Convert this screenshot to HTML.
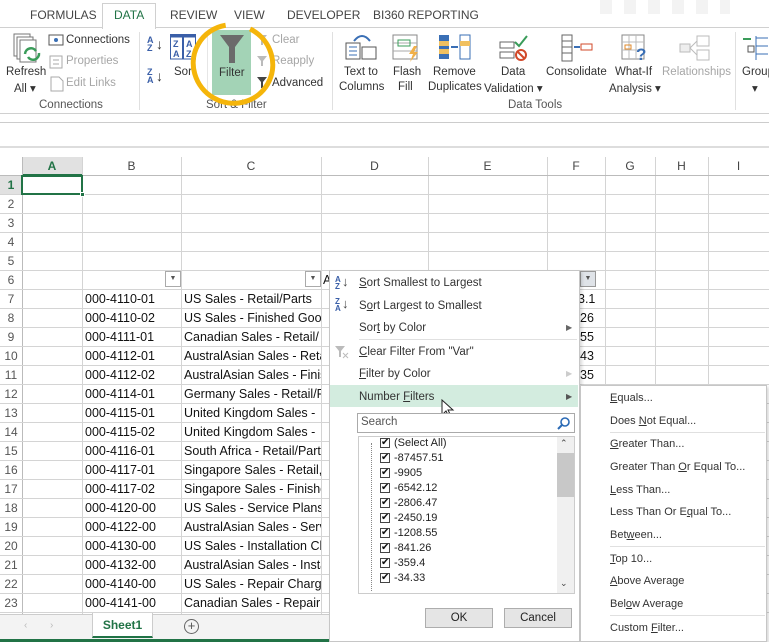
<!DOCTYPE html>
<html><head><meta charset="utf-8"><style>
*{margin:0;padding:0;box-sizing:border-box}
body{width:769px;height:642px;overflow:hidden;background:#fff;font-family:"Liberation Sans",sans-serif;color:#222;position:relative}
.a{position:absolute;white-space:nowrap}
.t{font-size:12px;color:#444}
.rb{font-size:11.5px;color:#333}
.g{color:#a6a6a6}
.hl{position:absolute;background:#d4d4d4}
.vl{position:absolute;background:#d4d4d4;width:1px}
.c{position:absolute;font-size:12.5px;color:#111;overflow:hidden;white-space:nowrap;height:19px;line-height:19px}
.rn{position:absolute;left:0;width:22px;text-align:center;font-size:12px;color:#555;height:19px;line-height:19px}
.ch{position:absolute;top:157px;height:19px;line-height:19px;text-align:center;font-size:12px;color:#444}
.mi{position:absolute;left:359px;font-size:11.5px;color:#333}
.si{position:absolute;left:610px;font-size:11px;color:#333}
.cb{position:absolute;left:380px;width:10px;height:10px;border:1px solid #444;background:#fff;font-size:10px;line-height:8px;text-align:center;color:#111}
.lv{position:absolute;left:394px;font-size:11px;color:#222}
</style></head><body>
<div class="a" style="left:102px;top:3px;width:54px;height:26px;border:1px solid #d0d0d0;border-bottom:none;background:#fff"></div>
<div class="a t" style="left:30px;top:8px">FORMULAS</div>
<div class="a t" style="left:114px;top:8px;color:#217346">DATA</div>
<div class="a t" style="left:170px;top:8px">REVIEW</div>
<div class="a t" style="left:234px;top:8px">VIEW</div>
<div class="a t" style="left:287px;top:8px">DEVELOPER</div>
<div class="a t" style="left:373px;top:8px">BI360 REPORTING</div>
<div class="a" style="left:0;top:27px;width:102px;height:1px;background:#d0d0d0"></div>
<div class="a" style="left:156px;top:27px;width:613px;height:1px;background:#d0d0d0"></div>
<div class="a" style="left:600px;top:0;width:130px;height:14px;background:repeating-linear-gradient(90deg,#f3f3f3 0 12px,#fff 12px 24px)"></div>
<div class="a" style="left:0;top:113px;width:769px;height:1px;background:#d0d0d0"></div>
<div class="a" style="left:0;top:122px;width:769px;height:1px;background:#ccc"></div>
<div class="a" style="left:0;top:146px;width:769px;height:2px;background:#ddd"></div>
<div class="vl" style="left:139px;top:32px;height:78px;background:#e0e0e0"></div>
<div class="vl" style="left:332px;top:32px;height:78px;background:#e0e0e0"></div>
<div class="vl" style="left:735px;top:32px;height:78px;background:#e0e0e0"></div>
<svg class="a" style="left:12px;top:32px" width="30" height="34"><rect x="2" y="2" width="16" height="22" fill="#fff" stroke="#777"/><rect x="5" y="5" width="16" height="22" fill="#fff" stroke="#777"/><rect x="8" y="8" width="16" height="22" fill="#fff" stroke="#777"/><path d="M13 22a6 6 0 0 1 11-3M27 21a6 6 0 0 1-11 4" stroke="#3a9c5a" stroke-width="2.5" fill="none"/></svg>
<div class="a rb" style="left:6px;top:66px">Refresh</div>
<div class="a rb" style="left:14px;top:81px">All ▾</div>
<svg class="a" style="left:48px;top:34px" width="16" height="14"><rect x="1" y="1" width="14" height="10" fill="#fff" stroke="#555"/><circle cx="8" cy="6" r="2" fill="#3a6fb5"/></svg>
<div class="a rb" style="left:66px;top:34px">Connections</div>
<svg class="a" style="left:49px;top:55px" width="14" height="14"><rect x="1" y="1" width="12" height="12" fill="#fff" stroke="#aaa"/><path d="M4 5h6M4 9h6" stroke="#aaa"/></svg>
<div class="a rb g" style="left:66px;top:55px">Properties</div>
<svg class="a" style="left:50px;top:76px" width="14" height="16"><path d="M1 1h8l4 4v10H1z" fill="#fff" stroke="#aaa"/></svg>
<div class="a rb g" style="left:66px;top:77px">Edit Links</div>
<div class="a rb" style="left:39px;top:99px;color:#555">Connections</div>
<div class="a" style="left:147px;top:36px;font-size:9px;line-height:8px;color:#3a5fa8;font-weight:bold">A<br>Z</div><div class="a" style="left:156px;top:36px;font-size:14px;color:#333">↓</div>
<div class="a" style="left:147px;top:68px;font-size:9px;line-height:8px;color:#3a5fa8;font-weight:bold">Z<br>A</div><div class="a" style="left:156px;top:68px;font-size:14px;color:#333">↓</div>
<svg class="a" style="left:170px;top:34px" width="26" height="26"><rect x="0" y="0" width="26" height="3" fill="#3a5fa8"/><rect x="0.5" y="3" width="12" height="22" fill="#fff" stroke="#3a5fa8"/><rect x="13.5" y="3" width="12" height="22" fill="#fff" stroke="#3a5fa8"/><text x="3" y="13" font-size="9" fill="#3a5fa8" font-family="Liberation Sans" font-weight="bold">Z</text><text x="3" y="23" font-size="9" fill="#3a5fa8" font-family="Liberation Sans" font-weight="bold">A</text><text x="16" y="13" font-size="9" fill="#3a5fa8" font-family="Liberation Sans" font-weight="bold">A</text><text x="16" y="23" font-size="9" fill="#3a5fa8" font-family="Liberation Sans" font-weight="bold">Z</text></svg>
<div class="a rb" style="left:174px;top:66px">Sort</div>
<div class="vl" style="left:207px;top:36px;height:56px;background:#e6e6e6"></div>
<div class="a" style="left:212px;top:30px;width:39px;height:65px;background:#a3d3b6"></div>
<svg class="a" style="left:218px;top:33px" width="28" height="32"><path d="M2 2h24L17 14v16h-6V14z" fill="#6b6b6b"/></svg>
<div class="a rb" style="left:219px;top:67px">Filter</div>
<svg class="a" style="left:256px;top:34px" width="12" height="12"><path d="M1 1h10L7 6v5H5V6z" fill="#bbb"/></svg>
<div class="a rb g" style="left:272px;top:34px">Clear</div>
<svg class="a" style="left:256px;top:55px" width="14" height="14"><path d="M1 1h10L7 6v5H5V6z" fill="#bbb"/></svg>
<div class="a rb g" style="left:272px;top:55px">Reapply</div>
<svg class="a" style="left:256px;top:76px" width="14" height="14"><path d="M1 1h10L7 6v6H5V6z" fill="#444"/><path d="M7 12l5-5" stroke="#3a6fb5" stroke-width="2"/></svg>
<div class="a rb" style="left:272px;top:77px">Advanced</div>
<div class="a rb" style="left:206px;top:99px;color:#555">Sort &amp; Filter</div>
<svg class="a" style="left:188px;top:18px" width="96" height="90"><ellipse cx="45" cy="46" rx="39" ry="40" fill="none" stroke="#f5b50a" stroke-width="5" stroke-dasharray="220 25" transform="rotate(-60 45 46)"/></svg>
<svg class="a" style="left:344px;top:33px" width="34" height="28"><rect x="2" y="10" width="14" height="16" fill="#fff" stroke="#555"/><path d="M5 14h8M5 18h8M5 22h8" stroke="#3a6fb5"/><rect x="18" y="14" width="14" height="12" fill="#fff" stroke="#555"/><path d="M10 8q8-10 16 0" stroke="#3a6fb5" stroke-width="2" fill="none"/></svg>
<div class="a rb" style="left:344px;top:66px">Text to</div>
<div class="a rb" style="left:339px;top:81px">Columns</div>
<svg class="a" style="left:392px;top:34px" width="30" height="28"><rect x="1" y="1" width="24" height="24" fill="#fff" stroke="#888"/><path d="M1 9h24M1 17h24" stroke="#aaa"/><rect x="6" y="6" width="12" height="6" fill="none" stroke="#3a9c5a"/><path d="M22 12l-5 8h4l-3 8 8-10h-4l3-6z" fill="#f0b04a"/></svg>
<div class="a rb" style="left:393px;top:66px">Flash</div>
<div class="a rb" style="left:398px;top:81px">Fill</div>
<svg class="a" style="left:438px;top:34px" width="34" height="26"><rect x="1" y="1" width="10" height="24" fill="#3a6fb5"/><rect x="1" y="7" width="10" height="5" fill="#f0c060"/><rect x="1" y="15" width="10" height="5" fill="#f0c060"/><path d="M13 13h7" stroke="#3a6fb5" stroke-width="2"/><rect x="22" y="1" width="10" height="24" fill="#fff" stroke="#3a6fb5"/><rect x="22" y="7" width="10" height="5" fill="#f0c060"/></svg>
<div class="a rb" style="left:433px;top:66px">Remove</div>
<div class="a rb" style="left:428px;top:81px">Duplicates</div>
<svg class="a" style="left:499px;top:34px" width="30" height="28"><rect x="1" y="8" width="14" height="6" fill="#fff" stroke="#666"/><rect x="1" y="18" width="14" height="6" fill="#fff" stroke="#666"/><path d="M16 8l4 4 8-10" stroke="#3a9c5a" stroke-width="2" fill="none"/><circle cx="22" cy="21" r="5" fill="none" stroke="#d2492a" stroke-width="2"/><path d="M18 17l8 8" stroke="#d2492a" stroke-width="2"/></svg>
<div class="a rb" style="left:501px;top:66px">Data</div>
<div class="a rb" style="left:484px;top:81px">Validation ▾</div>
<svg class="a" style="left:561px;top:34px" width="34" height="28"><rect x="1" y="1" width="10" height="26" fill="#fff" stroke="#666"/><path d="M1 7h10M1 13h10M1 19h10" stroke="#666"/><path d="M13 13h6" stroke="#3a6fb5" stroke-width="2"/><rect x="20" y="10" width="11" height="6" fill="#fff" stroke="#d2492a"/></svg>
<div class="a rb" style="left:546px;top:66px">Consolidate</div>
<svg class="a" style="left:621px;top:34px" width="30" height="28"><rect x="1" y="1" width="22" height="24" fill="#fff" stroke="#888"/><path d="M1 8h22M1 16h22M8 1v24M15 1v24" stroke="#bbb"/><rect x="4" y="11" width="6" height="4" fill="none" stroke="#e08a2a"/><text x="15" y="26" font-size="17" fill="#3a6fb5" font-weight="bold" font-family="Liberation Sans">?</text></svg>
<div class="a rb" style="left:615px;top:66px">What-If</div>
<div class="a rb" style="left:609px;top:81px">Analysis ▾</div>
<svg class="a" style="left:679px;top:34px" width="34" height="28"><rect x="1" y="10" width="10" height="8" fill="#eee" stroke="#bbb"/><rect x="18" y="2" width="12" height="10" fill="#fff" stroke="#bbb"/><rect x="18" y="16" width="12" height="10" fill="#fff" stroke="#bbb"/><path d="M11 14l7-7M11 14l7 7" stroke="#bbb"/></svg>
<div class="a rb g" style="left:662px;top:66px">Relationships</div>
<div class="a rb" style="left:508px;top:99px;color:#555">Data Tools</div>
<svg class="a" style="left:742px;top:34px" width="27" height="28"><path d="M1 5h8" stroke="#3a9c5a" stroke-width="2"/><rect x="6" y="12" width="6" height="6" fill="#fff" stroke="#555"/><path d="M14 2v24M14 4h12M14 12h12M14 20h12" stroke="#3a6fb5"/></svg>
<div class="a rb" style="left:742px;top:66px">Group</div>
<div class="a rb" style="left:752px;top:81px">▾</div>
<div class="a" style="left:22px;top:157px;width:60px;height:19px;background:#e1e1e1;border-bottom:2px solid #217346"></div>
<div class="a" style="left:0;top:176px;width:22px;height:19px;background:#e1e1e1"></div>
<div class="ch" style="left:22px;width:60px;color:#217346;font-weight:bold">A</div>
<div class="ch" style="left:82px;width:99px">B</div>
<div class="ch" style="left:181px;width:140px">C</div>
<div class="ch" style="left:321px;width:107px">D</div>
<div class="ch" style="left:428px;width:119px">E</div>
<div class="ch" style="left:547px;width:58px">F</div>
<div class="ch" style="left:605px;width:50px">G</div>
<div class="ch" style="left:655px;width:53px">H</div>
<div class="ch" style="left:708px;width:61px">I</div>
<div class="vl" style="left:22px;top:157px;height:457px;background:#bbb"></div>
<div class="vl" style="left:82px;top:157px;height:457px"></div>
<div class="vl" style="left:181px;top:157px;height:457px"></div>
<div class="vl" style="left:321px;top:157px;height:457px"></div>
<div class="vl" style="left:428px;top:157px;height:457px"></div>
<div class="vl" style="left:547px;top:157px;height:457px"></div>
<div class="vl" style="left:605px;top:157px;height:457px"></div>
<div class="vl" style="left:655px;top:157px;height:457px"></div>
<div class="vl" style="left:708px;top:157px;height:457px"></div>
<div class="hl" style="left:0;top:175px;width:769px;height:1px;background:#bbb"></div>
<div class="hl" style="left:0;top:194px;width:769px;height:1px"></div>
<div class="hl" style="left:0;top:213px;width:769px;height:1px"></div>
<div class="hl" style="left:0;top:232px;width:769px;height:1px"></div>
<div class="hl" style="left:0;top:251px;width:769px;height:1px"></div>
<div class="hl" style="left:0;top:270px;width:769px;height:1px"></div>
<div class="hl" style="left:0;top:289px;width:769px;height:1px"></div>
<div class="hl" style="left:0;top:308px;width:769px;height:1px"></div>
<div class="hl" style="left:0;top:327px;width:769px;height:1px"></div>
<div class="hl" style="left:0;top:346px;width:769px;height:1px"></div>
<div class="hl" style="left:0;top:365px;width:769px;height:1px"></div>
<div class="hl" style="left:0;top:384px;width:769px;height:1px"></div>
<div class="hl" style="left:0;top:403px;width:769px;height:1px"></div>
<div class="hl" style="left:0;top:422px;width:769px;height:1px"></div>
<div class="hl" style="left:0;top:441px;width:769px;height:1px"></div>
<div class="hl" style="left:0;top:460px;width:769px;height:1px"></div>
<div class="hl" style="left:0;top:479px;width:769px;height:1px"></div>
<div class="hl" style="left:0;top:498px;width:769px;height:1px"></div>
<div class="hl" style="left:0;top:517px;width:769px;height:1px"></div>
<div class="hl" style="left:0;top:536px;width:769px;height:1px"></div>
<div class="hl" style="left:0;top:555px;width:769px;height:1px"></div>
<div class="hl" style="left:0;top:574px;width:769px;height:1px"></div>
<div class="hl" style="left:0;top:593px;width:769px;height:1px"></div>
<div class="hl" style="left:0;top:612px;width:769px;height:1px"></div>
<div class="a" style="left:21px;top:175px;width:62px;height:20px;border:2px solid #217346"></div>
<div class="a" style="left:80px;top:192px;width:5px;height:5px;background:#217346;border:1px solid #fff"></div>
<div class="rn" style="top:176px;color:#217346;font-weight:bold">1</div>
<div class="rn" style="top:195px">2</div><div class="rn" style="top:214px">3</div><div class="rn" style="top:233px">4</div><div class="rn" style="top:252px">5</div><div class="rn" style="top:271px">6</div><div class="rn" style="top:290px">7</div><div class="rn" style="top:309px">8</div><div class="rn" style="top:328px">9</div><div class="rn" style="top:347px">10</div><div class="rn" style="top:366px">11</div><div class="rn" style="top:385px">12</div><div class="rn" style="top:404px">13</div><div class="rn" style="top:423px">14</div><div class="rn" style="top:442px">15</div><div class="rn" style="top:461px">16</div><div class="rn" style="top:480px">17</div><div class="rn" style="top:499px">18</div><div class="rn" style="top:518px">19</div><div class="rn" style="top:537px">20</div><div class="rn" style="top:556px">21</div><div class="rn" style="top:575px">22</div><div class="rn" style="top:594px">23</div>
<div class="a" style="left:165px;top:271px;width:16px;height:16px;border:1px solid #aaa;background:#fff;font-size:7px;text-align:center;line-height:14px;color:#555">▼</div>
<div class="a" style="left:305px;top:271px;width:16px;height:16px;border:1px solid #aaa;background:#fff;font-size:7px;text-align:center;line-height:14px;color:#555">▼</div>
<div class="c" style="left:323px;top:271px">A</div>
<div class="a" style="left:580px;top:271px;width:16px;height:16px;border:1px solid #999;background:#dfe3e8;font-size:7px;text-align:center;line-height:14px;color:#555">▼</div>
<div class="c" style="left:85px;top:290px">000-4110-01</div>
<div class="c" style="left:85px;top:309px">000-4110-02</div>
<div class="c" style="left:85px;top:328px">000-4111-01</div>
<div class="c" style="left:85px;top:347px">000-4112-01</div>
<div class="c" style="left:85px;top:366px">000-4112-02</div>
<div class="c" style="left:85px;top:385px">000-4114-01</div>
<div class="c" style="left:85px;top:404px">000-4115-01</div>
<div class="c" style="left:85px;top:423px">000-4115-02</div>
<div class="c" style="left:85px;top:442px">000-4116-01</div>
<div class="c" style="left:85px;top:461px">000-4117-01</div>
<div class="c" style="left:85px;top:480px">000-4117-02</div>
<div class="c" style="left:85px;top:499px">000-4120-00</div>
<div class="c" style="left:85px;top:518px">000-4122-00</div>
<div class="c" style="left:85px;top:537px">000-4130-00</div>
<div class="c" style="left:85px;top:556px">000-4132-00</div>
<div class="c" style="left:85px;top:575px">000-4140-00</div>
<div class="c" style="left:85px;top:594px">000-4141-00</div>
<div class="c" style="left:184px;top:290px;width:137px">US Sales - Retail/Parts</div>
<div class="c" style="left:184px;top:309px;width:137px">US Sales - Finished Goods</div>
<div class="c" style="left:184px;top:328px;width:137px">Canadian Sales - Retail/</div>
<div class="c" style="left:184px;top:347px;width:137px">AustralAsian Sales - Retail</div>
<div class="c" style="left:184px;top:366px;width:137px">AustralAsian Sales - Finished</div>
<div class="c" style="left:184px;top:385px;width:137px">Germany Sales - Retail/Parts</div>
<div class="c" style="left:184px;top:404px;width:137px">United Kingdom Sales -</div>
<div class="c" style="left:184px;top:423px;width:137px">United Kingdom Sales -</div>
<div class="c" style="left:184px;top:442px;width:137px">South Africa - Retail/Parts</div>
<div class="c" style="left:184px;top:461px;width:137px">Singapore Sales - Retail,</div>
<div class="c" style="left:184px;top:480px;width:137px">Singapore Sales - Finished</div>
<div class="c" style="left:184px;top:499px;width:137px">US Sales - Service Plans</div>
<div class="c" style="left:184px;top:518px;width:137px">AustralAsian Sales - Service</div>
<div class="c" style="left:184px;top:537px;width:137px">US Sales - Installation Ch</div>
<div class="c" style="left:184px;top:556px;width:137px">AustralAsian Sales - Install</div>
<div class="c" style="left:184px;top:575px;width:137px">US Sales - Repair Charge</div>
<div class="c" style="left:184px;top:594px;width:137px">Canadian Sales - Repair</div>
<div class="c" style="left:578px;top:290px">3.1</div>
<div class="c" style="left:580px;top:309px">26</div>
<div class="c" style="left:580px;top:328px">55</div>
<div class="c" style="left:580px;top:347px">43</div>
<div class="c" style="left:580px;top:366px">35</div>
<div class="a" style="left:0;top:614px;width:329px;height:26px;background:#f3f3f3;border-top:1px solid #ccc"></div>
<div class="a" style="left:24px;top:620px;font-size:10px;color:#bbb">‹</div>
<div class="a" style="left:50px;top:620px;font-size:10px;color:#bbb">›</div>
<div class="a" style="left:92px;top:613px;width:61px;height:25px;background:#fff;border-bottom:2px solid #217346;border-left:1px solid #ccc;border-right:1px solid #ccc;font-size:12px;font-weight:bold;color:#217346;text-align:center;line-height:24px">Sheet1</div>
<div class="a" style="left:184px;top:619px;width:15px;height:15px;border:1px solid #666;border-radius:50%;font-size:13px;line-height:12px;text-align:center;color:#555">+</div>
<div class="a" style="left:0;top:639px;width:329px;height:3px;background:#217346"></div>
<div class="a" style="left:329px;top:270px;width:251px;height:372px;background:#fff;border:1px solid #c6c6c6;box-shadow:2px 2px 3px rgba(0,0,0,.15)"></div>
<div class="a" style="left:335px;top:276px;font-size:8px;line-height:7px;color:#3a5fa8;font-weight:bold">A<br>Z</div><div class="a" style="left:342px;top:274px;font-size:13px;color:#444">↓</div>
<div class="mi" style="top:277px"><u>S</u>ort Smallest to Largest</div>
<div class="a" style="left:335px;top:298px;font-size:8px;line-height:7px;color:#3a5fa8;font-weight:bold">Z<br>A</div><div class="a" style="left:342px;top:296px;font-size:13px;color:#444">↓</div>
<div class="mi" style="top:300px">S<u>o</u>rt Largest to Smallest</div>
<div class="mi" style="top:322px">Sor<u>t</u> by Color</div>
<div class="a" style="left:566px;top:323px;font-size:8px;color:#666">▶</div>
<div class="a" style="left:359px;top:339px;width:218px;height:1px;background:#e0e0e0"></div>
<svg class="a" style="left:334px;top:345px" width="16" height="14"><path d="M1 1h10L7 6v6H5V6z" fill="#bbb"/><path d="M9 8l5 5M14 8l-5 5" stroke="#bbb"/></svg>
<div class="mi g" style="top:346px"><u>C</u>lear Filter From "Var"</div>
<div class="mi g" style="top:368px"><u>F</u>ilter by Color</div>
<div class="a" style="left:566px;top:369px;font-size:8px;color:#ccc">▶</div>
<div class="a" style="left:330px;top:385px;width:248px;height:22px;background:#d3ecdf"></div>
<div class="mi" style="top:391px">Number <u>F</u>ilters</div>
<div class="a" style="left:566px;top:392px;font-size:8px;color:#555">▶</div>
<svg class="a" style="left:441px;top:399px" width="14" height="20"><path d="M1 1v15l4-4 3 6 2-1-3-6h5z" fill="#fff" stroke="#222"/></svg>
<div class="a" style="left:357px;top:413px;width:218px;height:20px;border:1px solid #aaa;background:#fff"></div>
<div class="a" style="left:361px;top:416px;font-size:11.5px;color:#555">Search</div>
<svg class="a" style="left:557px;top:416px" width="14" height="14"><circle cx="8" cy="6" r="4" fill="none" stroke="#2a6ab5" stroke-width="1.6"/><path d="M5 9l-4 4" stroke="#2a6ab5" stroke-width="2"/></svg>
<div class="a" style="left:358px;top:436px;width:217px;height:158px;border:1px solid #ccc;background:#fff;overflow:hidden"></div>
<div class="a" style="left:557px;top:437px;width:17px;height:156px;background:#f0f0f0"></div>
<div class="a" style="left:557px;top:453px;width:17px;height:44px;background:#c8c8c8"></div>
<div class="a" style="left:560px;top:438px;font-size:9px;color:#444">⌃</div>
<div class="a" style="left:560px;top:578px;font-size:9px;color:#444">⌄</div>
<div class="a" style="left:371px;top:443px;width:1px;height:148px;border-left:1px dotted #888"></div>
<div class="cb" style="top:438px">✔</div><div class="lv" style="top:437px">(Select All)</div>
<div class="cb" style="top:453px">✔</div><div class="lv" style="top:452px">-87457.51</div>
<div class="cb" style="top:468px">✔</div><div class="lv" style="top:467px">-9905</div>
<div class="cb" style="top:483px">✔</div><div class="lv" style="top:482px">-6542.12</div>
<div class="cb" style="top:498px">✔</div><div class="lv" style="top:497px">-2806.47</div>
<div class="cb" style="top:513px">✔</div><div class="lv" style="top:512px">-2450.19</div>
<div class="cb" style="top:528px">✔</div><div class="lv" style="top:527px">-1208.55</div>
<div class="cb" style="top:543px">✔</div><div class="lv" style="top:542px">-841.26</div>
<div class="cb" style="top:558px">✔</div><div class="lv" style="top:557px">-359.4</div>
<div class="cb" style="top:573px">✔</div><div class="lv" style="top:572px">-34.33</div>
<div class="a" style="left:425px;top:608px;width:68px;height:20px;border:1px solid #adadad;background:#e5e5e5;font-size:11.5px;text-align:center;line-height:18px">OK</div>
<div class="a" style="left:504px;top:608px;width:68px;height:20px;border:1px solid #adadad;background:#e5e5e5;font-size:11.5px;text-align:center;line-height:18px">Cancel</div>
<div class="a" style="left:580px;top:385px;width:187px;height:257px;background:#fff;border:1px solid #c6c6c6;box-shadow:2px 2px 3px rgba(0,0,0,.15)"></div>
<div class="si" style="top:392px"><u>E</u>quals...</div>
<div class="si" style="top:415px">Does <u>N</u>ot Equal...</div>
<div class="a" style="left:610px;top:432px;width:155px;height:1px;background:#e0e0e0"></div>
<div class="si" style="top:438px"><u>G</u>reater Than...</div>
<div class="si" style="top:461px">Greater Than <u>O</u>r Equal To...</div>
<div class="si" style="top:484px"><u>L</u>ess Than...</div>
<div class="si" style="top:506px">Less Than Or E<u>q</u>ual To...</div>
<div class="si" style="top:529px">Bet<u>w</u>een...</div>
<div class="a" style="left:610px;top:546px;width:155px;height:1px;background:#e0e0e0"></div>
<div class="si" style="top:553px"><u>T</u>op 10...</div>
<div class="si" style="top:575px"><u>A</u>bove Average</div>
<div class="si" style="top:598px">Bel<u>o</u>w Average</div>
<div class="a" style="left:610px;top:615px;width:155px;height:1px;background:#e0e0e0"></div>
<div class="si" style="top:622px">Custom <u>F</u>ilter...</div>
</body></html>
